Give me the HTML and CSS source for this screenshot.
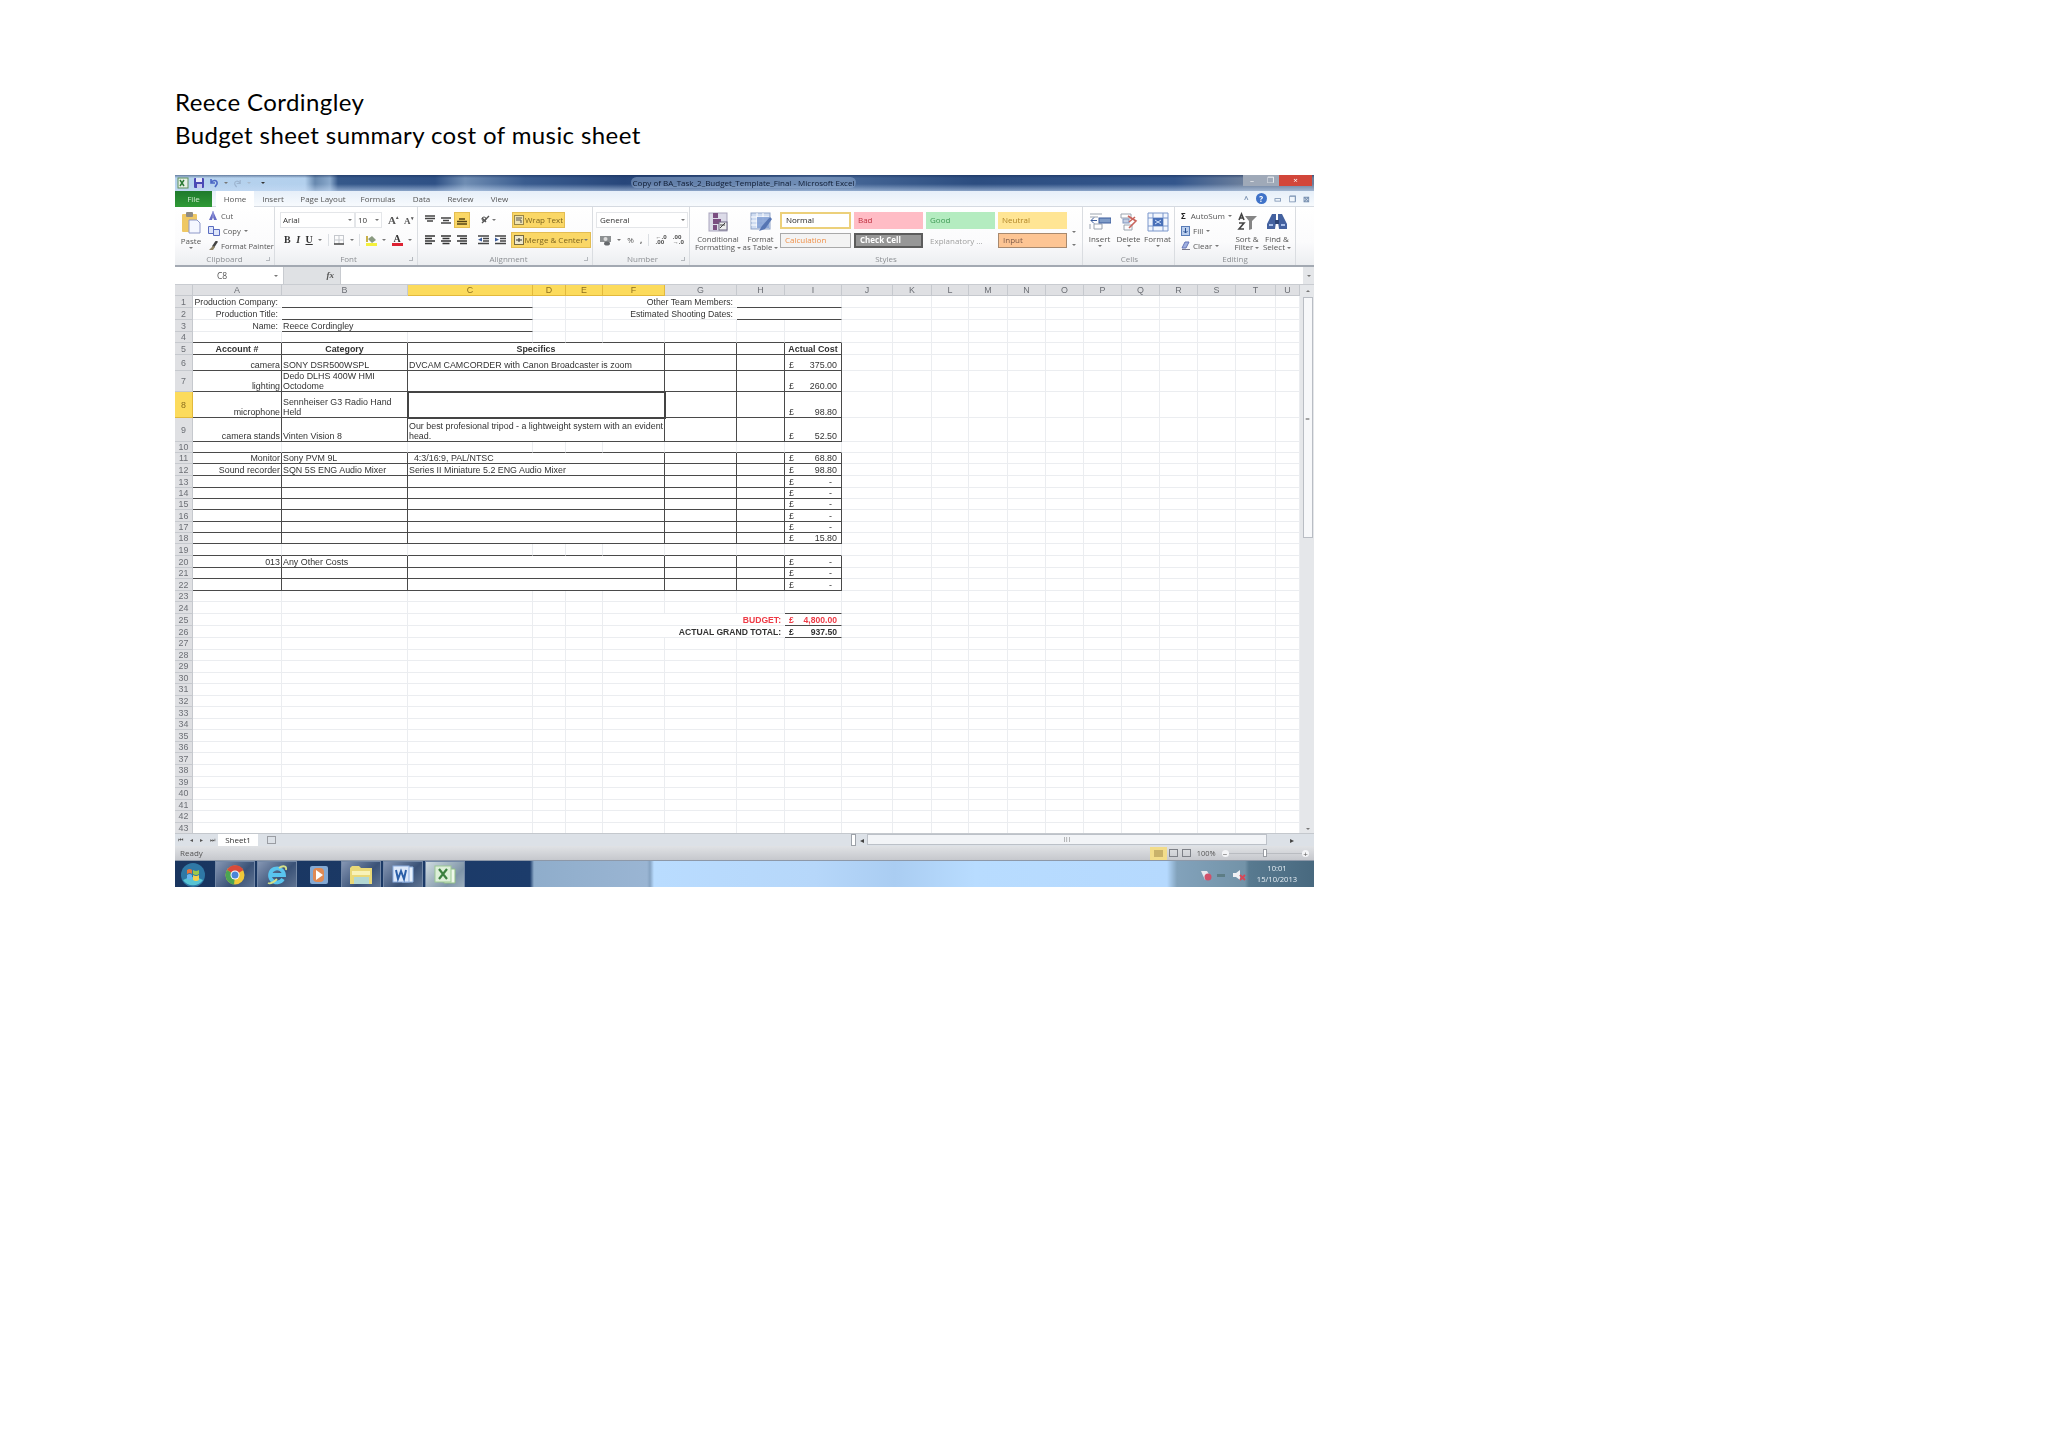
FILE: index.html
```html
<!DOCTYPE html>
<html lang="en">
<head>
    <meta charset="UTF-8">
    <title>Budget sheet summary</title>
    <link rel="stylesheet" href="styles.css">
</head>
<body>
    <header class="doc-title">
        <p>Reece Cordingley</p>
        <p>Budget sheet summary cost of music sheet</p>
    </header>

    <main class="window">
        <div class="titlebar">
            <div class="quick">
                <svg width="12" height="12" viewBox="0 0 12 12"><rect x="1" y="1" width="10" height="10" fill="#e6f0e4" stroke="#5d8f5d"/><path d="M3 3l4 6M7 3L3 9" stroke="#2c7a35" stroke-width="1.5"/></svg>
                <svg width="10" height="10" viewBox="0 0 10 10"><rect width="10" height="10" rx="1" fill="#4b49b5"/><rect x="2" y="0" width="6" height="4" fill="#e8e8fa"/><rect x="3" y="6" width="5" height="4" fill="#c9c9ee"/></svg>
                <svg width="10" height="10" viewBox="0 0 10 10"><path d="M2 1v4h4M2 5c2-4 7-3 6 1L6 9" fill="none" stroke="#4b66c4" stroke-width="1.6"/></svg>
                <span class="arrow"></span>
                <svg width="9" height="9" viewBox="0 0 10 10"><path d="M8 1v4H4M8 5C6 1 1 2 2 6l2 3" fill="none" stroke="#9db4cf" stroke-width="1.3"/></svg>
                <span class="arrow pale"></span>
                <span class="arrow last"></span>
            </div>
            <div class="caption"><span>Copy of BA_Task_2_Budget_Template_Final - Microsoft Excel</span></div>
            <div class="controls"><i>–</i><i>❐</i><i class="close">×</i></div>
        </div>

        <nav class="tabs">
            <span class="file">File</span>
            <span class="active">Home</span>
            <span>Insert</span>
            <span>Page Layout</span>
            <span>Formulas</span>
            <span>Data</span>
            <span>Review</span>
            <span>View</span>
            <div class="tab-icons">
                <b>^</b><b class="help">?</b><b>▭</b><b>❐</b><b>⊠</b>
            </div>
        </nav>

        <section class="ribbon">
            <div class="group clipboard">
                <div class="body">
                    <div class="big">
                        <svg width="20" height="22" viewBox="0 0 20 22"><rect x="1" y="2" width="15" height="18" rx="1" fill="#efc864"/><rect x="5" y="0" width="7" height="5" rx="1" fill="#8e8b84"/><path d="M8 8h8l3 3v10H8z" fill="#f5f7ff" stroke="#8e98c8"/></svg>
                        <span>Paste</span><span class="arrow"></span>
                    </div>
                    <div class="list">
                        <div><svg width="10" height="10" viewBox="0 0 10 10"><path d="M5 0L1 9h3l1-3 1 3h3z" fill="#6a6fc4"/><path d="M5 0v6" stroke="#9a9fe0"/></svg>Cut</div>
                        <div><svg width="12" height="10" viewBox="0 0 12 10"><path d="M.5.5h5v7h-5zM5.500 3.500h6v6h-6z" fill="#dfe6fa" stroke="#5a6cc0"/></svg>Copy <span class="arrow"></span></div>
                        <div><svg width="10" height="10" viewBox="0 0 10 10"><path d="M9 0L5 6" stroke="#444" stroke-width="2.500"/><path d="M5 5L1 9h4l2-3z" fill="#8f8466"/></svg>Format Painter</div>
                    </div>
                </div>
                <footer>Clipboard<em></em></footer>
            </div>

            <div class="group font">
                <div class="body rows">
                    <div class="line font-top">
                        <div class="box">Arial<span class="arrow"></span></div>
                        <div class="box">10<span class="arrow"></span></div>
                        <b class="grow">A<sup>▴</sup></b>
                        <b class="shrink">A<sup>▾</sup></b>
                    </div>
                    <div class="line font-bottom">
                        <b>B</b><b class="italic">I</b><b class="under">U</b><span class="arrow"></span><s></s>
                        <svg width="10" height="10" viewBox="0 0 10 10"><path d="M.5 0v9M5 0v9M9.500 0v9M0 .5h10M0 5h10" stroke="#c5c8cd" fill="none"/><path d="M0 9h10" stroke="#444" stroke-width="1.500"/></svg>
                        <span class="arrow"></span><s></s>
                        <svg width="11" height="11" viewBox="0 0 11 11"><path d="M2 4l4-3 4 4-4 3z" fill="#8a9a80"/><path d="M1 1v6" stroke="#c9b04a" stroke-width="2"/><path d="M0 9.500h11" stroke="#f4f03c" stroke-width="3"/></svg>
                        <span class="arrow"></span>
                        <b class="fontcolor">A</b><span class="arrow"></span>
                    </div>
                </div>
                <footer>Font<em></em></footer>
            </div>

            <div class="group alignment">
                <div class="body rows">
                    <div class="line align-top">
                        <svg width="10" height="10" viewBox="0 0 10 10"><path d="M0 1h10M0 3.500h10M2 6h6" stroke="#444" stroke-width="1.300"/></svg>
                        <svg width="10" height="10" viewBox="0 0 10 10"><path d="M0 3h10M2 5.500h6M0 8h10" stroke="#444" stroke-width="1.300"/></svg>
                        <span class="on"><svg width="10" height="10" viewBox="0 0 10 10"><path d="M2 4h6M0 6.500h10M0 9h10" stroke="#554415" stroke-width="1.300"/></svg></span>
                        <svg width="15" height="10" viewBox="0 0 15 10"><path d="M1 8l7-7M1 3l4 4" stroke="#555" stroke-width="1.400"/><circle cx="3" cy="4" r="2" fill="none" stroke="#555"/><path d="M11 4h4l-2 2z" fill="#777"/></svg>
                        <span class="on wide"><svg width="10" height="10" viewBox="0 0 10 10"><rect x=".5" y=".5" width="9" height="9" fill="#eee2b0" stroke="#9a8748"/><path d="M2 3h6M2 5h5v3" stroke="#555" fill="none"/></svg>Wrap Text</span>
                    </div>
                    <div class="line align-bottom">
                        <svg width="10" height="10" viewBox="0 0 10 10"><path d="M0 1h10M0 3.500h7M0 6h10M0 8.500h7" stroke="#333" stroke-width="1.300"/></svg>
                        <svg width="10" height="10" viewBox="0 0 10 10"><path d="M0 1h10M1.500 3.500h7M0 6h10M1.500 8.500h7" stroke="#333" stroke-width="1.300"/></svg>
                        <svg width="10" height="10" viewBox="0 0 10 10"><path d="M0 1h10M3 3.500h7M0 6h10M3 8.500h7" stroke="#333" stroke-width="1.300"/></svg>
                        <svg width="11" height="10" viewBox="0 0 11 10"><path d="M0 1h11M5 3.500h6M5 6h6M0 8.500h11" stroke="#444" stroke-width="1.300"/><path d="M4 2.500v4L0 4.700z" fill="#3c5d9c"/></svg>
                        <svg width="11" height="10" viewBox="0 0 11 10"><path d="M0 1h11M5 3.500h6M5 6h6M0 8.500h11" stroke="#444" stroke-width="1.300"/><path d="M0 2.500v4l4-1.800z" fill="#3c5d9c"/></svg>
                        <span class="on wide"><svg width="10" height="10" viewBox="0 0 10 10"><rect x=".5" y=".5" width="9" height="9" fill="#eee8cc" stroke="#776a40"/><path d="M2 5h6M5 3v4" stroke="#333"/></svg>Merge &amp; Center<span class="arrow"></span></span>
                    </div>
                </div>
                <footer>Alignment<em></em></footer>
            </div>

            <div class="group number">
                <div class="body rows">
                    <div class="line"><div class="box general">General<span class="arrow"></span></div></div>
                    <div class="line number-bottom">
                        <svg width="11" height="11" viewBox="0 0 11 11"><rect y="1" width="11" height="6" fill="#8d9092"/><circle cx="5.500" cy="4" r="2" fill="#ddd"/><ellipse cx="7" cy="8.500" rx="3" ry="2" fill="#66696c"/></svg>
                        <span class="arrow"></span><span>%</span><b>,</b><s></s>
                        <small>←.0<br>.00</small>
                        <small>.00<br>→.0</small>
                    </div>
                </div>
                <footer>Number<em></em></footer>
            </div>

            <div class="group styles">
                <div class="body">
                    <div class="big">
                        <svg width="20" height="20" viewBox="0 0 20 20"><rect x="1" y="1" width="18" height="18" fill="#dcdbe8" stroke="#a9a5bd"/><path d="M5 1h5v5H5zM5 7h8v5H5zM5 13h4v5H5z" fill="#7a4d80"/><rect x="11" y="10" width="8" height="8" fill="#eee" stroke="#6a6480"/><path d="M12 16l5-5M12 13h5" stroke="#444"/></svg>
                        <span>Conditional<br>Formatting <i class="arrow"></i></span>
                    </div>
                    <div class="big">
                        <svg width="22" height="20" viewBox="0 0 22 20"><rect x="1" y="1" width="19" height="16" fill="#cfdcf1" stroke="#8fa3c7"/><path d="M1 5h18M1 9h18M1 13h18M7 1v15M13 1v15" stroke="#fff"/><path d="M7 5h12v11H7z" fill="#7b9ad2" opacity=".8"/><path d="M20 5l-8 9-3 5 6-2 7-10z" fill="#5675b3"/></svg>
                        <span>Format<br>as Table <i class="arrow"></i></span>
                    </div>
                    <div class="gallery">
                        <span class="normal">Normal</span><span class="bad">Bad</span><span class="good">Good</span><span class="neutral">Neutral</span>
                        <span class="calc">Calculation</span><span class="check">Check Cell</span><span class="explain">Explanatory ...</span><span class="input">Input</span>
                    </div>
                    <div class="gallery-scroll"><i class="arrow"></i><i class="arrow"></i></div>
                </div>
                <footer>Styles</footer>
            </div>

            <div class="group cells">
                <div class="body">
                    <div class="big">
                        <svg width="22" height="20" viewBox="0 0 22 20"><path d="M1 2h12M1 5h8M5 12h8v5H5zM1 12v5" fill="none" stroke="#9aa3ae"/><rect x="10" y="6" width="12" height="5" fill="#7f9cc8" stroke="#3c5d9c"/><path d="M8 8.500H2M5 5.500l-3 3 3 3" stroke="#3c5d9c" fill="none"/></svg>
                        <span>Insert</span><span class="arrow"></span>
                    </div>
                    <div class="big">
                        <svg width="20" height="20" viewBox="0 0 20 20"><path d="M2 2h10v4H2zM5 13h8v5H5z" fill="none" stroke="#9aa3ae"/><rect x="4" y="7" width="6" height="4" fill="#c3cee2" stroke="#8298c0"/><path d="M9 4l8 5-7 7M16 5l-6 5" stroke="#c9645c" stroke-width="1.600" fill="none"/></svg>
                        <span>Delete</span><span class="arrow"></span>
                    </div>
                    <div class="big">
                        <svg width="22" height="20" viewBox="0 0 22 20"><path d="M1 1h20v18H1zM1 6h20M1 14h20M6 1v18M16 1v18" fill="#f2f6fd" stroke="#7b97cc"/><rect x="6" y="6" width="10" height="8" fill="#4970b8"/><path d="M8 8l6 4M14 8l-6 4" stroke="#cfe0fa"/></svg>
                        <span>Format</span><span class="arrow"></span>
                    </div>
                </div>
                <footer>Cells</footer>
            </div>

            <div class="group editing">
                <div class="body">
                    <div class="list">
                        <div><b>Σ</b>AutoSum <span class="arrow"></span></div>
                        <div><svg width="9" height="10" viewBox="0 0 9 10"><rect x=".5" y=".5" width="8" height="9" fill="#b9cdec" stroke="#5a7db8"/><path d="M4.500 2v5M2.500 5l2 2 2-2" stroke="#274f93" fill="none"/></svg>Fill <span class="arrow"></span></div>
                        <div><svg width="9" height="9" viewBox="0 0 9 9"><path d="M4 1h4L5 7H1z" fill="#9fb0e0" stroke="#6474b8"/><path d="M1 8.500h8" stroke="#778"/></svg>Clear <span class="arrow"></span></div>
                    </div>
                    <div class="big">
                        <svg width="20" height="20" viewBox="0 0 20 20"><path d="M2 8l2.500-6L7 8M3 6h3M2 11h5l-5 6h5" stroke="#444" fill="none" stroke-width="1.600"/><path d="M8 4h12l-5 5v8l-3 1V9z" fill="#858585"/></svg>
                        <span>Sort &amp;<br>Filter <i class="arrow"></i></span>
                    </div>
                    <div class="big">
                        <svg width="20" height="20" viewBox="0 0 20 20"><path d="M5 2h4v8l-1 7H0v-5zM11 2h4l5 10v5h-8l-1-7z" fill="#43619f"/><path d="M8 8h4v4H8z" fill="#2b4375"/><path d="M2 13h4M14 13h4" stroke="#a8bee8" stroke-width="2"/></svg>
                        <span>Find &amp;<br>Select <i class="arrow"></i></span>
                    </div>
                </div>
                <footer>Editing</footer>
            </div>
        </section>

        <div class="formula">
            <div class="namebox"><span>C8</span><i class="arrow"></i></div>
            <div class="fx"><i>fx</i></div>
            <div class="formula-input"></div>
            <div class="expand"><i class="arrow"></i></div>
        </div>

        <div class="workspace">
            <div class="sheet" id="sheet"></div>
            <div class="vscroll"><span class="up"><i class="arrow flip"></i></span><span class="thumb">=</span><span class="down"><i class="arrow"></i></span></div>
        </div>

        <div class="sheetbar">
            <div class="nav-arrows"><i>⏮</i><i>◂</i><i>▸</i><i>⏭</i></div>
            <span class="sheet-tab">Sheet1</span>
            <span class="new-tab"></span>
            <div class="hscroll"><i class="split"></i><i>◂</i><span class="thumb">|||</span><i class="right">▸</i></div>
        </div>

        <div class="status">
            <span>Ready</span>
            <div class="zoom">
                <i class="view on"></i><i class="view"></i><i class="view"></i>
                <span>100%</span>
                <i class="round">−</i><i class="slider"><i></i></i><i class="round">+</i>
            </div>
        </div>

        <div class="taskbar">
            <div class="start">
                <svg width="26" height="26" viewBox="0 0 26 26"><circle cx="13" cy="13" r="12" fill="#2f78a5"/><path d="M3 18a12 12 0 0 0 20 0q-10-6-20 0" fill="#58c4d4"/><path d="M7 8q3-2 5 0v4q-2-2-5 0z" fill="#e8743c"/><path d="M13 8q3 2 6 0v4q-3 2-6 0z" fill="#9cc849"/><path d="M7 13q3-2 5 0v5q-2-2-5 0z" fill="#68b5ee"/><path d="M13 13q3 2 6 0v5q-3 2-6 0z" fill="#f5cf4b"/></svg>
            </div>
            <div class="task">
                <svg width="20" height="20" viewBox="0 0 20 20"><circle cx="10" cy="10" r="9.500" fill="#f0c93a"/><path d="M10 10L2 5a9.500 9.500 0 0 1 16.500 0z" fill="#d84a3a"/><path d="M10 10L2 5a9.500 9.500 0 0 0 7 14.500z" fill="#4ba553"/><circle cx="10" cy="10" r="4.500" fill="#fff"/><circle cx="10" cy="10" r="3.500" fill="#4a86d8"/></svg>
            </div>
            <div class="task">
                <svg width="22" height="22" viewBox="0 0 22 22"><path d="M17 15a7 7 0 1 1 1-4H6" fill="none" stroke="#59c4ee" stroke-width="3.800"/><path d="M2 19c2 1 6-1 9-4M20 6c1-4-3-5-7-2" fill="none" stroke="#d3e08a" stroke-width="1.800"/></svg>
            </div>
            <div class="task plain">
                <svg width="18" height="18" viewBox="0 0 18 18"><rect width="18" height="18" rx="2" fill="#84a9d4"/><rect x="3" y="2" width="11" height="14" rx="4" fill="#e08a54"/><path d="M6 4l7 5-7 5z" fill="#fff"/></svg>
            </div>
            <div class="task">
                <svg width="24" height="20" viewBox="0 0 24 20"><path d="M1 3l2-2h7l2 2h11v16H1z" fill="#ead978"/><rect x="3" y="6" width="18" height="4" fill="#f8f2b8"/><rect x="5" y="12" width="15" height="7" fill="#b3d8d4"/></svg>
            </div>
            <div class="task">
                <svg width="22" height="20" viewBox="0 0 22 20"><path d="M10 2h11v15H10z" fill="#e8f1fc" stroke="#90b3e0"/><rect x="1" y="1" width="16" height="16" fill="#dce8fa" stroke="#8bade0"/><path d="M4 5l2 9 3-8 3 8 2-9" fill="none" stroke="#2b5fa8" stroke-width="2"/></svg>
            </div>
            <div class="task current">
                <svg width="22" height="20" viewBox="0 0 22 20"><path d="M10 4h11v14H10z" fill="#eef8ea" stroke="#8fbf85"/><rect x="1" y="1" width="16" height="16" fill="#dcefd8" stroke="#9cc895"/><path d="M5 4l8 10M13 4L5 14" stroke="#3c8040" stroke-width="2.200"/></svg>
            </div>
            <div class="tray">
                <svg width="12" height="12" viewBox="0 0 12 12"><path d="M1 2h6l3 5-5 4z" fill="#e8e8ee"/><circle cx="8" cy="8" r="3.500" fill="#d0506a"/></svg>
                <svg width="10" height="8" viewBox="0 0 10 8"><path d="M0 3h8v3H0z" fill="#5d7d85"/></svg>
                <svg width="14" height="12" viewBox="0 0 14 12"><path d="M1 4h3l4-3v10L4 8H1z" fill="#f0f0f4"/><path d="M8 6l5 5M13 6l-5 5" stroke="#d84858" stroke-width="2"/></svg>
            </div>
            <div class="clock">10:01<br>15/10/2013</div>
        </div>
    </main>

    <script src="sheet.js"></script>
</body>
</html>
```

FILE: styles.css
```css
* {
    box-sizing: border-box;
}
body {
    margin: 0;
    background: #fff;
    font-family: "Open Sans", "Noto Sans", sans-serif;
}
.doc-title {
    padding: 85px 0 0 175px;
    font-family: Lato, sans-serif;
    font-size: 24px;
    line-height: 33px;
    color: #000;
}
.doc-title p {
    margin: 0;
    width: max-content;
    letter-spacing: 0.41px;
}
.window {
    display: flex;
    flex-direction: column;
    width: 1139px;
    height: 712px;
    margin: 24px 0 0 175px;
    overflow: hidden;
    background: #fff;
    font-size: 8px;
    line-height: 10px;
    color: #555;
    filter: blur(0.6px);
}
i, em {
    font-style: normal;
}
svg {
    display: block;
    flex: none;
}
.arrow {
    display: inline-block;
    flex: none;
    border: 2px solid transparent;
    border-top-color: #777;
    border-bottom: 0;
    vertical-align: middle;
}
.arrow.pale {
    border-top-color: #a9b9cc;
}
.arrow.flip {
    transform: scaleY(-1);
}

/* title bar */
.titlebar {
    display: flex;
    flex: none;
    height: 16px;
    background: linear-gradient(rgba(20, 40, 80, .5), transparent 3px, transparent 9px, rgba(200, 220, 245, .6)),
        linear-gradient(90deg, #b7d3ee 0, #b3d0ed 130px, #6788ae 140px, #8aa9cc 155px, #35588a 163px, #2f5186 260px, #6f8db3 290px, #3a5c8f 350px, #27467a 450px, #4b6c9b 640px, #2c4d80 800px, #33568c 1000px, #6c7f9c 1070px);
}
.quick {
    display: flex;
    align-items: center;
    gap: 5px;
    width: 425px;
    padding-left: 2px;
}
.quick .last {
    margin-left: 5px;
    border-top-color: #333;
}
.caption {
    width: 287px;
    text-align: center;
    font-size: 8px;
    line-height: 15px;
    color: #0f1c33;
    white-space: nowrap;
}
.caption span {
    padding: 0 2px;
    border-radius: 6px;
    background: rgba(150, 175, 210, .5);
}
.controls {
    display: flex;
    width: 71px;
    height: 11px;
    margin-left: auto;
    color: #fff;
    text-align: center;
    line-height: 10px;
}
.controls i {
    width: 18px;
    background: #9fa9b8;
}
.controls .close {
    width: 33px;
    background: #d2463a;
}

/* ribbon tabs */
.tabs {
    display: flex;
    flex: none;
    height: 16px;
    background: linear-gradient(#e6eff9, #f7fafd);
    border-bottom: 1px solid #d5dae1;
    line-height: 15px;
    text-align: center;
}
.tabs > span {
    width: 38px;
}
.tabs .file {
    width: 37px;
    margin-right: 4px;
    height: 16px;
    background: linear-gradient(#1f7a2c, #2f9a36);
    color: #cfe8cf;
}
.tabs .active {
    height: 16px;
    background: #fff;
}
.tabs span:nth-child(4) {
    width: 62px;
}
.tabs span:nth-child(5) {
    width: 48px;
}
.tabs span:nth-child(6), .tabs span:nth-child(7), .tabs span:nth-child(8) {
    width: 39px;
}
.tab-icons {
    display: flex;
    justify-content: space-between;
    align-items: center;
    width: 66px;
    margin: 0 4px 0 auto;
    color: #7890b0;
}
.help {
    width: 11px;
    height: 11px;
    border-radius: 50%;
    background: #3f72c8;
    color: #fff;
    line-height: 11px;
}

/* ribbon */
.ribbon {
    display: flex;
    flex: none;
    height: 60px;
    background: linear-gradient(#fff, #fbfbfc 60%, #eceef1);
    border-bottom: 2px solid #a3a9b2;
}
.group {
    display: flex;
    flex: none;
    flex-direction: column;
    border-right: 1px solid #dadde1;
}
.body {
    display: flex;
    height: 46px;
    padding-top: 5px;
}
.body.rows {
    flex-direction: column;
    gap: 4px;
}
.line {
    display: flex;
    align-items: center;
    height: 16px;
}
.group footer {
    position: relative;
    height: 12px;
    line-height: 12px;
    text-align: center;
    color: #8d9094;
}
.group footer em {
    position: absolute;
    right: 4px;
    top: 4px;
    width: 4px;
    height: 4px;
    border: solid #b4b8bd;
    border-width: 0 1px 1px 0;
}
.big {
    display: flex;
    flex-direction: column;
    align-items: center;
    flex: none;
    text-align: center;
    line-height: 8px;
    white-space: nowrap;
}
.big > span:not(.arrow) {
    margin-top: 3px;
}
.big > .arrow {
    margin-top: 2px;
}
.list {
    display: flex;
    flex-direction: column;
    justify-content: space-between;
    height: 41px;
    margin-top: -2px;
    white-space: nowrap;
}
.list div {
    display: flex;
    align-items: center;
    gap: 3px;
    height: 11px;
}
.box {
    display: flex;
    align-items: center;
    justify-content: space-between;
    height: 16px;
    padding: 0 2px;
    border: 1px solid #e4e6e9;
    background: #fff;
    color: #333;
}
.line s {
    width: 1px;
    height: 12px;
    background: #dcdfe3;
}
.clipboard {
    width: 100px;
}
.clipboard .big {
    width: 32px;
}
.clipboard .list {
    margin-left: 1px;
    font-size: 7.6px;
}
.font {
    width: 143px;
    padding-left: 5px;
}
.font-top .box:first-child {
    width: 75px;
}
.font-top .box:nth-child(2) {
    width: 27px;
    margin-right: 6px;
}
.grow {
    width: 16px;
    font: bold 11px "Liberation Serif", serif;
}
.shrink {
    font: bold 9px "Liberation Serif", serif;
}
.line sup {
    font-size: 5px;
}
.font-bottom {
    justify-content: space-between;
    padding: 0 5px 0 4px;
    font-family: "Liberation Serif", serif;
    font-size: 10px;
    color: #333;
}
.italic {
    font-style: italic;
}
.under {
    text-decoration: underline;
}
.fontcolor {
    width: 11px;
    border-bottom: 3px solid #dd2233;
    text-align: center;
    line-height: 8px;
}
.alignment {
    width: 175px;
    padding-left: 7px;
}
.align-top, .align-bottom {
    gap: 6px;
}
.on {
    display: flex;
    align-items: center;
    justify-content: center;
    height: 16px;
    border: 1px solid #e3bd52;
    background: #fad766;
}
.align-top .on:nth-child(3) {
    width: 16px;
    margin: 0 5px 0 -3px;
}
.align-top .wide {
    width: 53px;
    margin-left: 10px;
}
.on.wide {
    gap: 1px;
    color: #7d641f;
    white-space: nowrap;
}
.align-bottom svg:nth-child(4) {
    margin-left: 5px;
}
.align-bottom .wide {
    width: 80px;
    margin-left: -1px;
}
.number {
    width: 97px;
    padding-left: 3px;
}
.general {
    width: 92px;
    padding-left: 3px;
}
.number-bottom {
    justify-content: space-between;
    padding: 0 5px 0 4px;
}
.number-bottom small {
    font-size: 6px;
    line-height: 5px;
    font-weight: bold;
}
.styles {
    width: 393px;
}
.styles .big:first-child {
    width: 48px;
    margin-left: 4px;
}
.styles .big:nth-child(2) {
    width: 37px;
}
.styles .big {
    font-size: 7.8px;
}
.gallery {
    display: grid;
    grid-template-columns: 71px 69px 69px 69px;
    grid-template-rows: 17px 15px;
    gap: 4px 3px;
    margin-left: 1px;
}
.gallery span {
    padding-left: 4px;
    line-height: 16px;
    font-size: 8px;
}
.gallery .normal {
    border: 2px solid #ecd07a;
    background: #fff;
    color: #222;
    line-height: 12px;
}
.bad {
    background: #ffbcc5;
    color: #c03040;
}
.good {
    background: #b4ecc0;
    color: #3f9a55;
}
.neutral {
    background: #ffe594;
    color: #b08528;
}
.calc {
    border: 1px solid #a9a9a9;
    background: #f3f3f3;
    color: #f09048;
}
.gallery .calc, .gallery .check, .gallery .input {
    line-height: 12px;
}
.check {
    border: 2px solid #5c5c5c;
    background: #979797;
    color: #fff;
    font-weight: bold;
}
.gallery .check {
    line-height: 10px;
}
.explain {
    color: #a0a0a0;
}
.input {
    border: 1px solid #a8896e;
    background: #fdc594;
    color: #7d5a48;
}
.gallery-scroll {
    display: flex;
    flex-direction: column;
    justify-content: flex-end;
    gap: 11px;
    padding: 0 0 7px 5px;
}
.cells {
    width: 92px;
    padding-left: 2px;
}
.cells .big {
    width: 29px;
}
.editing {
    width: 121px;
}
.editing .list {
    width: 57px;
    padding-left: 6px;
}
.editing .list b {
    width: 9px;
    color: #222;
}
.editing .big {
    width: 30px;
}

/* formula bar */
.formula {
    display: flex;
    flex: none;
    height: 18px;
    padding-bottom: 1px;
    background: #c9ccd1;
}
.namebox {
    display: flex;
    align-items: center;
    width: 108px;
    padding: 0 5px 0 42px;
    justify-content: space-between;
    background: #fff;
    font-size: 8.5px;
}
.fx {
    width: 58px;
    padding-right: 6px;
    border: solid #c8cbd0;
    border-width: 0 1px;
    background: #dfe1e4;
    text-align: right;
    line-height: 16px;
}
.fx i {
    font: italic bold 9px "Liberation Serif", serif;
}
.formula-input {
    flex: 1;
    background: #fff;
}
.expand {
    display: flex;
    align-items: center;
    justify-content: center;
    width: 11px;
    background: #e4e6e9;
}

/* worksheet */
.workspace {
    display: flex;
    flex: none;
    height: 548px;
    overflow: hidden;
    background: #e5e7ea;
}
.sheet {
    display: grid;
    flex: none;
    grid-template-columns: 18px 89px 126px 125px 33px 37px 62px 72px 48px 57px 51px 39px 37px 39px 38px 38px 38px 38px 38px 38px 40px 24px;
    grid-template-rows: 11px 12px 12px 12px 11px 12px 16px 21px 26px 24px 11px 11px 12px 12px 11px 11px 12px 11px 11px 12px 12px 11px 12px 11px 12px 12px 12px;
    grid-auto-rows: 11.56px;
    background: #fff;
    font-family: "Liberation Sans", Arial, sans-serif;
    font-size: 8.9px;
    color: #333;
}
.sheet div {
    display: flex;
    align-items: flex-end;
    min-width: 0;
    border: solid #ebedf0;
    border-width: 0 1px 1px 0;
    padding: 0 1px;
    line-height: 10px;
    white-space: pre;
}
.sheet .head {
    align-items: center;
    justify-content: center;
    padding: 0;
    background: #dfe0e3;
    border-color: #c6c9ce;
    color: #6c6f75;
}
.sheet .head.hot {
    background: #fcdb5c;
    border-color: #e2b93c;
    color: #8d6f1e;
}
.sheet .r {
    justify-content: flex-end;
    padding-right: 1px;
    text-align: right;
}
.sheet .label {
    justify-content: flex-end;
    padding-right: 3px;
    border-right-color: #fff;
    font-size: 8.7px;
}
.sheet .c {
    justify-content: center;
    font-weight: bold;
}
.sheet .b {
    border-right-color: #4a4a4a;
    border-bottom-color: #4a4a4a;
}
.sheet .top {
    border-bottom-color: #4a4a4a;
}
.sheet .money {
    justify-content: space-between;
    padding: 0 4px;
}
.sheet .bold {
    font-size: 8.6px;
    font-weight: bold;
}
.sheet .red {
    color: #ee3b46;
}
.sheet .selected {
    outline: 2px solid #444;
    outline-offset: -1px;
}
.vscroll {
    display: flex;
    flex-direction: column;
    align-items: center;
    width: 13px;
    margin-left: 1px;
}
.vscroll .up {
    height: 12px;
}
.vscroll .thumb {
    width: 10px;
    height: 241px;
    border: 1px solid #b9bdc4;
    background: #f7f8fa;
    text-align: center;
    line-height: 239px;
}
.vscroll .down {
    margin-top: auto;
}

/* sheet tabs and status */
.sheetbar {
    display: flex;
    flex: none;
    height: 13px;
    border-top: 1px solid #c4c8cd;
    background: #dce1e7;
    line-height: 12px;
}
.nav-arrows {
    display: flex;
    justify-content: space-around;
    width: 43px;
    font-size: 6px;
}
.sheet-tab {
    width: 40px;
    background: #fff;
    color: #333;
    text-align: center;
}
.new-tab {
    width: 9px;
    height: 8px;
    margin: 2px 0 0 9px;
    border: 1px solid #9a9da3;
}
.hscroll {
    display: flex;
    width: 465px;
    margin-left: auto;
    font-size: 8px;
    color: #444;
}
.hscroll .split {
    width: 5px;
    margin: 0 4px 0 2px;
    border: 1px solid #9da2a9;
    background: #fff;
}
.hscroll .thumb {
    width: 400px;
    height: 11px;
    margin-left: 3px;
    border: 1px solid #bcc1c8;
    background: #f2f4f7;
    font-size: 5px;
    line-height: 9px;
    text-align: center;
}
.hscroll .right {
    margin-left: 23px;
}
.status {
    display: flex;
    flex: none;
    justify-content: space-between;
    height: 15px;
    padding: 0 5px;
    border-bottom: 1px solid #8d98a8;
    background: linear-gradient(#e0e2e5, #c6c8cd);
    line-height: 14px;
}
.zoom {
    display: flex;
    align-items: center;
    width: 159px;
}
.view {
    width: 9px;
    height: 8px;
    margin-right: 4px;
    border: 1px solid #7d8087;
}
.view.on {
    width: 17px;
    height: 13px;
    margin-right: 2px;
    border-color: #f2dc8a;
    background: #c9b26a;
    border-width: 3px 4px;
}
.zoom > span {
    width: 27px;
    padding-left: 2px;
    font-size: 7.4px;
}
.round {
    width: 7px;
    height: 7px;
    border-radius: 50%;
    background: #f4f5f7;
    line-height: 7px;
    text-align: center;
}
.slider {
    display: flex;
    justify-content: center;
    width: 74px;
    height: 1px;
    background: #b9bcc1;
}
.slider i {
    width: 4px;
    height: 8px;
    margin-top: -4px;
    border: 1px solid #9a9da3;
    background: #fff;
}

/* taskbar */
.taskbar {
    display: flex;
    flex: none;
    height: 27px;
    background: linear-gradient(90deg, #19355f 0, #1c3c6b 355px, #8fadcb 359px, #9ab5d3 472px, #86a3c2 475px, #b9dcff 479px, #b6d7fa 640px, #aacdf2 720px, #b8dcff 800px, #b5d9fe 992px, #82a2bb 1002px, #7393a8 1070px, #587a90 1074px, #48697f);
}
.start {
    width: 40px;
    padding: 1px 0 0 5px;
}
.task {
    display: flex;
    align-items: center;
    justify-content: center;
    width: 40px;
    margin-right: 2px;
    border: 1px solid #7388a6;
    background: linear-gradient(135deg, #8596b3, #3a5277 60%, #5f7492);
}
.task.plain {
    border-color: transparent;
    background: none;
}
.task.current {
    background: linear-gradient(135deg, #cfdbe0, #7f95a8 70%, #9cafbd);
}
.tray {
    display: flex;
    align-items: center;
    gap: 5px;
    margin-left: auto;
    margin-right: 1px;
}
.clock {
    width: 60px;
    margin-right: 7px;
    padding-top: 2px;
    color: #e6eef4;
    text-align: center;
    font-size: 7.6px;
    line-height: 11px;
}
```

FILE: sheet.js
```js
const COLS = 'ABCDEFGHIJKLMNOPQRSTU'.split('');
const ROWS = 43;

// cell text: key -> [text, classes, colspan]
const cells = {
    A1: ['Production Company:', 'label'],
    B1: ['', 'top', 2],
    F1: ['Other Team Members:', 'label', 2],
    H1: ['', 'top', 2],
    A2: ['Production Title:', 'label'],
    B2: ['', 'top', 2],
    F2: ['Estimated Shooting Dates:', 'label', 2],
    H2: ['', 'top', 2],
    A3: ['Name:', 'label'],
    B3: ['Reece Cordingley', 'top', 2],
    A5: ['Account #', 'c'],
    B5: ['Category', 'c'],
    C5: ['Specifics', 'c'],
    I5: ['Actual Cost', 'c'],
    A6: ['camera', 'r'],
    B6: ['SONY DSR500WSPL'],
    C6: ['DVCAM CAMCORDER with Canon Broadcaster is zoom'],
    A7: ['lighting', 'r'],
    B7: ['Dedo DLHS 400W HMI\nOctodome'],
    A8: ['microphone', 'r'],
    B8: ['Sennheiser G3 Radio Hand\nHeld'],
    C8: ['', 'selected'],
    A9: ['camera stands', 'r'],
    B9: ['Vinten Vision 8'],
    C9: ['Our best profesional tripod - a lightweight system with an evident\nhead.'],
    A11: ['Monitor', 'r'],
    B11: ['Sony PVM 9L'],
    C11: ['\u00a0 4:3/16:9, PAL/NTSC'],
    A12: ['Sound recorder', 'r'],
    B12: ['SQN 5S ENG Audio Mixer'],
    C12: ['Series II Miniature 5.2 ENG Audio Mixer'],
    A20: ['013', 'r'],
    B20: ['Any Other Costs'],
    F25: ['BUDGET:', 'label bold red', 3],
    F26: ['ACTUAL GRAND TOTAL:', 'label bold', 3]
};

const costs = {
    6: '375.00', 7: '260.00', 8: '98.80', 9: '52.50', 11: '68.80', 12: '98.80',
    13: '-  ', 14: '-  ', 15: '-  ', 16: '-  ', 17: '-  ', 18: '15.80', 20: '-  ', 21: '-  ', 22: '-  ',
    25: '4,800.00', 26: '937.50'
};

const sheet = document.getElementById('sheet');

function add(text, classes, span) {
    const cell = document.createElement('div');
    cell.className = classes;
    if (span > 1) cell.style.gridColumn = 'span ' + span;
    cell.textContent = text;
    sheet.appendChild(cell);
    return cell;
}

function bordered(row) {
    return (row >= 5 && row <= 9) || (row >= 11 && row <= 18) || (row >= 20 && row <= 22);
}

add('', 'head');
COLS.forEach(col => add(col, 'CDEF'.includes(col) ? 'head hot' : 'head'));

for (let row = 1; row <= ROWS; row++) {
    add(row, row === 8 ? 'head hot' : 'head');
    for (let i = 0; i < COLS.length; i++) {
        const col = COLS[i];
        let [text, classes, span] = cells[col + row] || ['', ''];
        classes = classes || '';
        if (col === 'C' && bordered(row)) span = 4;
        if (i < 9) {
            if (bordered(row)) classes += ' b';
            else if ([4, 10, 19].includes(row)) classes += ' top';
        }
        if (col === 'I' && [24, 25, 26].includes(row)) classes += ' top';
        if (col === 'I' && costs[row]) {
            classes += ' money' + (row > 24 ? ' bold' : '') + (row === 25 ? ' red' : '');
            const cell = add('', classes);
            ['£', costs[row]].forEach(value => {
                const part = document.createElement('span');
                part.textContent = value;
                cell.appendChild(part);
            });
        } else {
            add(text, classes, span);
        }
        if (span) i += span - 1;
    }
}
```
